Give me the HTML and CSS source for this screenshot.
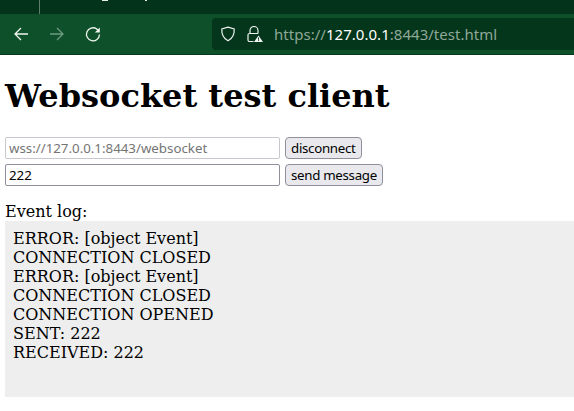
FILE: index.html
```html
<!DOCTYPE html>
<html lang="en">
<head>
    <meta charset="UTF-8">
    <title>Websocket test client</title>
    <link rel="stylesheet" href="styles.css">
</head>
<body>
    <!-- Browser chrome -->
    <div class="tabstrip">
        <span class="tab-sep"></span>
        <span class="tab-mark"></span>
        <span class="tab-mark small"></span>
    </div>
    <div class="toolbar">
        <svg class="nav-icon" viewBox="0 0 16 16"><path d="M15 8H2M8 2 2 8l6 6"/></svg>
        <svg class="nav-icon off" viewBox="0 0 16 16"><path d="M1 8H14M8 2l6 6-6 6"/></svg>
        <svg class="nav-icon" viewBox="0 0 16 16">
            <path d="M14.500 8.500A6.500 6.500 0 1 1 11.500 2.800L13.500 4.800"/>
            <path class="head" d="M14.800 1.500V6.500H9.800z"/>
        </svg>
        <div class="urlbar">
            <svg class="url-icon" viewBox="0 0 16 16"><path d="M8 1.200 14.200 3c.3 5.500-1.800 9.500-6.200 11.800C3.600 12.500 1.500 8.500 1.800 3z"/></svg>
            <svg class="url-icon" viewBox="0 0 16 16">
                <path d="M3 7.500V4.500a4 4 0 0 1 8 0v3M6.500 15.500H2.500A1.500 1.500 0 0 1 1 14V9a1.500 1.500 0 0 1 1.500-1.500H11"/>
                <path class="warn" d="M11.500 9.500 16 16H7z"/>
                <path class="warn-mark" d="M11.500 11.500v2.200M11.500 14.300v.8"/>
            </svg>
            <span class="url">https://<b>127.0.0.1</b>:8443/test.html</span>
        </div>
    </div>

    <div class="page">
        <h1>Websocket test client</h1>
        <div class="row">
            <input class="field" type="text" placeholder="wss://127.0.0.1:8443/websocket" disabled>
            <button>disconnect</button>
        </div>
        <div class="row">
            <input class="field" type="text" value="222">
            <button>send message</button>
        </div>
        <div class="log-label">Event log:</div>
        <div class="log">
            ERROR: [object Event]<br>
            CONNECTION CLOSED<br>
            ERROR: [object Event]<br>
            CONNECTION CLOSED<br>
            CONNECTION OPENED<br>
            SENT: 222<br>
            RECEIVED: 222
        </div>
    </div>
</body>
</html>
```
FILE: styles.css
```css
html, body { margin: 0; padding: 0; height: 411px; overflow: hidden; background: #fff; }
body { font-family: "DejaVu Serif", serif; font-size: 16px; color: #000; }

.tabstrip { display: flex; align-items: flex-start; height: 14px; background: #03331a; }
.tab-sep { width: 1px; height: 14px; margin-left: 39px; background: #5f7f6c; }
.tab-mark { width: 6px; height: 1px; margin-left: 62px; background: #e8efe9; }
.tab-mark.small { width: 2px; height: 1px; margin-left: 37px; }

.toolbar { display: flex; align-items: center; height: 40px; background: #0d5029; border-bottom: 1px solid #06391c; }
.nav-icon { width: 16px; height: 16px; margin-left: 13px; margin-right: 7px; fill: none; stroke: #f0f5f1; stroke-width: 1.3; }
.nav-icon.off { stroke: #6f9a80; }
.nav-icon .head { fill: #f0f5f1; stroke: none; }
.urlbar { display: flex; align-items: center; flex: 1; height: 32px; margin-left: 104px; padding-left: 8px; background: #03361a; border-radius: 4px 0 0 4px; }
.url-icon { width: 16px; height: 16px; margin-right: 11px; fill: none; stroke: #eef3ef; stroke-width: 1.2; }
.url-icon .warn { fill: #eef3ef; stroke: none; }
.url-icon .warn-mark { stroke: #03361a; stroke-width: 1; }
.url { font-family: "Noto Sans", sans-serif; font-size: 15px; letter-spacing: .03px; color: #8fa898; }
.url b { font-weight: 400; color: #fff; }

.page { padding: 0 5px; }
h1 { margin: 0; padding-top: 21px; height: 61px; font-size: 32px; line-height: 40px; }
.row { display: flex; align-items: center; gap: 5px; margin-bottom: 5px; }
.field { box-sizing: border-box; width: 275px; height: 22px; padding: 1px 3px; border: 1px solid #8f8f9d; border-radius: 2px; background: #fff; font-family: "Noto Sans", sans-serif; font-size: 13.300px; color: #000; }
.field:disabled { border-color: #c8c8ce; }
.field::placeholder { color: #757575; opacity: 1; }
button { box-sizing: border-box; height: 22px; padding: 0 5px; border: 1px solid #8f8f9d; border-radius: 4px; background: #e9e9ed; font-family: "Noto Sans", sans-serif; font-size: 13.300px; letter-spacing: -.3px; color: #000; }
.log-label { margin-top: 16px; line-height: 19px; }
.log { height: 176px; box-sizing: border-box; margin-right: -5px; padding: 8px; background: #eee; line-height: 19px; }
```
